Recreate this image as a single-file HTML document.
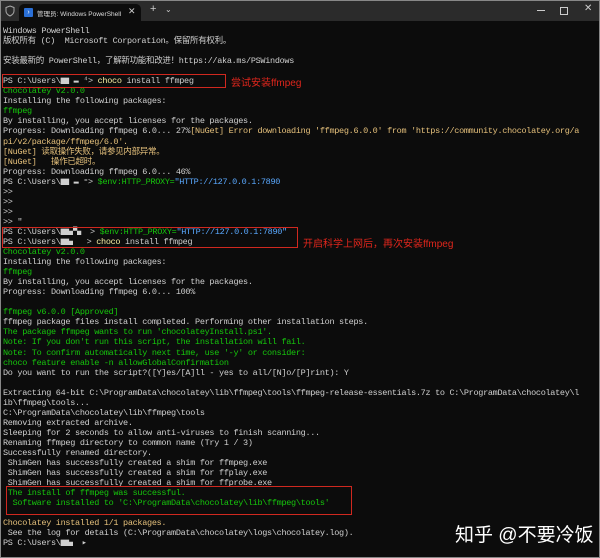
<!DOCTYPE html>
<html><head><meta charset="utf-8"><style>
body{margin:0;width:600px;height:558px;background:#0c0c0c;overflow:hidden;position:relative;font-family:"Liberation Sans","Noto Sans CJK SC",sans-serif}
.tb{position:absolute;left:0;top:0;width:600px;height:21px;background:#2b2b2b}
.tab{position:absolute;left:19px;top:4px;width:122px;height:17px;background:#0c0c0c;border-radius:5px 5px 0 0}
pre{position:absolute;left:3px;top:26px;margin:0;font-family:"Liberation Mono","Noto Sans CJK SC",monospace;font-size:8.5px;letter-spacing:-0.3px;line-height:10.06px;color:#d0d0d0}
pre div{height:10.06px;white-space:pre}
.g{color:#16c60c}.y{color:#e5c07b}.b{color:#5aa9ff}.yb{color:#f9f1a5}
.box{position:absolute;border:1px solid #d0281f}
.an{position:absolute;color:#e0261c;font-size:10px}
</style></head><body>
<div class="tb">
<svg style="position:absolute;left:5px;top:5px" width="10" height="12" viewBox="0 0 10 12"><path d="M5 1L9 2.5V6c0 2.5-2 4-4 5C3 10 1 8.5 1 6V2.5z" fill="none" stroke="#aaa" stroke-width="1"/></svg>
<div class="tab">
<div style="position:absolute;left:5px;top:4px;width:9px;height:9px;background:#2a6fd6;border-radius:1px;color:#fff;font-size:7px;line-height:9px;text-align:center">›</div>
<div style="position:absolute;left:18px;top:4px;color:#ddd;font-size:6.5px;white-space:nowrap">管理员: Windows PowerShell</div>
<div style="position:absolute;left:109px;top:2px;color:#ccc;font-size:9px">✕</div>
</div>
<div style="position:absolute;left:150px;top:3px;color:#ccc;font-size:11px">+</div>
<div style="position:absolute;left:165px;top:5px;color:#ccc;font-size:8px">⌄</div>
<div style="position:absolute;left:537px;top:10px;width:8px;height:1px;background:#ccc"></div>
<div style="position:absolute;left:560px;top:7px;width:6px;height:6px;border:1px solid #ccc"></div>
<div style="position:absolute;left:584px;top:3px;color:#ccc;font-size:10px">✕</div>
</div>
<pre><div>Windows PowerShell</div><div>版权所有 (C)  Microsoft Corporation。保留所有权利。</div><div></div><div>安装最新的 PowerShell，了解新功能和改进！https://aka.ms/PSWindows</div><div></div><div>PS C:\Users\▆ ▬ ⁴> <span class="yb">choco</span> install ffmpeg</div><div class="g">Chocolatey v2.0.0</div><div>Installing the following packages:</div><div class="g">ffmpeg</div><div>By installing, you accept licenses for the packages.</div><div>Progress: Downloading ffmpeg 6.0... 27%<span class="y">[NuGet] Error downloading 'ffmpeg.6.0.0' from 'https://community.chocolatey.org/a</span></div><div class="y">pi/v2/package/ffmpeg/6.0'.</div><div class="y">[NuGet] 读取操作失败，请参见内部异常。</div><div class="y">[NuGet]   操作已超时。</div><div>Progress: Downloading ffmpeg 6.0... 46%</div><div>PS C:\Users\▆ ▬ ⁼> <span class="g">$env:HTTP_PROXY=</span><span class="b">"HTTP://127.0.0.1:7890</span></div><div>>></div><div>>></div><div>>></div><div>>> "</div><div>PS C:\Users\▆▞▖ > <span class="g">$env:HTTP_PROXY=</span><span class="b">"HTTP://127.0.0.1:7890"</span></div><div>PS C:\Users\▆▖  > <span class="yb">choco</span> install ffmpeg</div><div class="g">Chocolatey v2.0.0</div><div>Installing the following packages:</div><div class="g">ffmpeg</div><div>By installing, you accept licenses for the packages.</div><div>Progress: Downloading ffmpeg 6.0... 100%</div><div></div><div class="g">ffmpeg v6.0.0 [Approved]</div><div>ffmpeg package files install completed. Performing other installation steps.</div><div class="g">The package ffmpeg wants to run 'chocolateyInstall.ps1'.</div><div class="g">Note: If you don't run this script, the installation will fail.</div><div class="g">Note: To confirm automatically next time, use '-y' or consider:</div><div class="g">choco feature enable -n allowGlobalConfirmation</div><div>Do you want to run the script?([Y]es/[A]ll - yes to all/[N]o/[P]rint): Y</div><div></div><div>Extracting 64-bit C:\ProgramData\chocolatey\lib\ffmpeg\tools\ffmpeg-release-essentials.7z to C:\ProgramData\chocolatey\l</div><div>ib\ffmpeg\tools...</div><div>C:\ProgramData\chocolatey\lib\ffmpeg\tools</div><div>Removing extracted archive.</div><div>Sleeping for 2 seconds to allow anti-viruses to finish scanning...</div><div>Renaming ffmpeg directory to common name (Try 1 / 3)</div><div>Successfully renamed directory.</div><div> ShimGen has successfully created a shim for ffmpeg.exe</div><div> ShimGen has successfully created a shim for ffplay.exe</div><div> ShimGen has successfully created a shim for ffprobe.exe</div><div class="g"> The install of ffmpeg was successful.</div><div class="g">  Software installed to 'C:\ProgramData\chocolatey\lib\ffmpeg\tools'</div><div></div><div class="y">Chocolatey installed 1/1 packages.</div><div> See the log for details (C:\ProgramData\chocolatey\logs\chocolatey.log).</div><div>PS C:\Users\▆▖ ▸</div></pre>
<div class="box" style="left:2px;top:74px;width:222px;height:12px"></div>
<div class="an" style="left:231px;top:74px">尝试安装ffmpeg</div>
<div class="box" style="left:2px;top:227px;width:294px;height:19px"></div>
<div class="an" style="left:303px;top:235px">开启科学上网后，再次安装ffmpeg</div>
<div class="box" style="left:6px;top:486px;width:344px;height:27px"></div>
<div style="position:absolute;left:455px;top:520px;color:#fff;font-size:19px;white-space:nowrap">知乎 @不要冷饭</div>
<div style="position:absolute;left:0;top:0;width:598px;height:556px;border:1px solid #888;pointer-events:none"></div>
</body></html>
